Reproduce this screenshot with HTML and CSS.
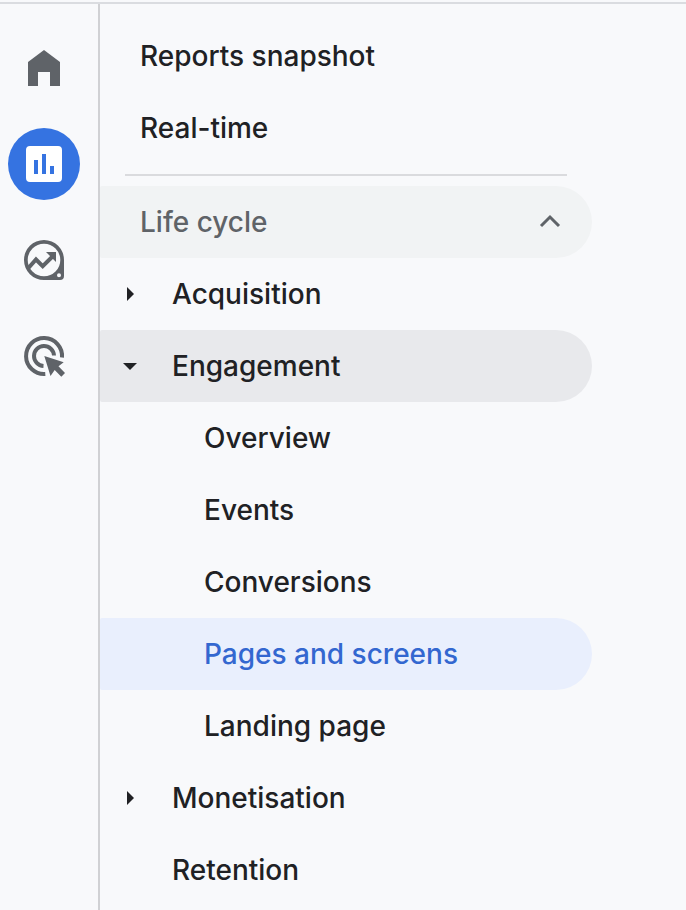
FILE: index.html
```html
<!DOCTYPE html>
<html lang="en">
<head>
    <meta charset="UTF-8">
    <meta name="viewport" content="width=device-width, initial-scale=1.0">
    <title>Reports</title>
    <link rel="stylesheet" href="styles.css">
</head>
<body>
    <div class="app">
        <nav class="rail" aria-label="Main">
            <a class="rail-item" href="#home" aria-label="Home">
                <svg viewBox="0 0 72 72"><path d="M36 18 20 30v24h10V40h12v14h10V30z"/></svg>
            </a>
            <a class="rail-item active" href="#reports" aria-label="Reports">
                <svg viewBox="0 0 72 72"><path fill-rule="evenodd" d="M22 18h28a4 4 0 0 1 4 4v28a4 4 0 0 1-4 4H22a4 4 0 0 1-4-4V22a4 4 0 0 1 4-4zM26 32v14h4V32zM34 26v20h4V26zM42 38v8h4v-8z"/></svg>
            </a>
            <a class="rail-item" href="#explore" aria-label="Explore">
                <svg viewBox="0 0 72 72">
                    <path fill-rule="evenodd" d="M36 16a20 20 0 0 0 0 40h16a4 4 0 0 0 4-4V36a20 20 0 0 0-20-20zm0 3.700a16.300 16.300 0 1 1 0 32.600 16.300 16.300 0 0 1 0-32.600zm15 29.600a2 2 0 1 0 0 4 2 2 0 0 0 0-4z"/>
                    <path class="stroke" d="m20 44.500 8-9 6.700 6.700L46 31"/>
                    <path d="M38 28h10v10z"/>
                </svg>
            </a>
            <a class="rail-item" href="#advertising" aria-label="Advertising">
                <svg viewBox="0 0 72 72">
                    <path class="stroke" d="M54 37.500A18 18 0 1 0 37.300 54M46 35.500A10 10 0 1 0 35.500 46"/>
                    <path d="m36.300 36 19.400 6.300-5.200 3.900 6.500 6.700-3.700 3.800-6.600-6.800-4.200 6z"/>
                </svg>
            </a>
        </nav>

        <nav class="menu" aria-label="Reports">
            <a class="row" href="#snapshot">Reports snapshot</a>
            <a class="row" href="#realtime">Real-time</a>
            <hr class="divider">
            <button class="row section" type="button" aria-expanded="true">
                Life cycle
                <svg class="chevron" viewBox="0 0 24 24"><path d="m3 16 9-9 9 9"/></svg>
            </button>
            <button class="row group" type="button" aria-expanded="false">
                <svg class="caret" viewBox="0 0 16 16"><path d="M5 1v14l7-7z"/></svg>
                Acquisition
            </button>
            <button class="row group open" type="button" aria-expanded="true">
                <svg class="caret" viewBox="0 0 16 16"><path d="M1 5h14l-7 7z"/></svg>
                Engagement
            </button>
            <a class="row child" href="#overview">Overview</a>
            <a class="row child" href="#events">Events</a>
            <a class="row child" href="#conversions">Conversions</a>
            <a class="row child selected" href="#pages" aria-current="page">Pages and screens</a>
            <a class="row child" href="#landing">Landing page</a>
            <button class="row group" type="button" aria-expanded="false">
                <svg class="caret" viewBox="0 0 16 16"><path d="M5 1v14l7-7z"/></svg>
                Monetisation
            </button>
            <a class="row leaf" href="#retention">Retention</a>
        </nav>
    </div>
</body>
</html>
```
FILE: styles.css
```css
* {
    box-sizing: border-box;
}

body {
    margin: 0;
    padding-top: 2px;
    background: #f8f9fb;
    color: #202124;
    font-family: Inter, Roboto, sans-serif;
}

.app {
    display: flex;
    min-height: calc(100vh - 2px);
    border-top: 2px solid #dadce0;
}

.rail {
    display: flex;
    flex-direction: column;
    flex: none;
    gap: 24px;
    padding: 28px 18px 0 8px;
    border-right: 2px solid #d0d1d4;
}

.rail-item {
    width: 72px;
    height: 72px;
    border-radius: 50%;
    color: #5f6368;
}

.rail-item.active {
    background: #3573e1;
    color: #fff;
}

.rail-item svg {
    display: block;
    fill: currentColor;
}

.rail-item .stroke {
    fill: none;
    stroke: currentColor;
    stroke-width: 4;
}

.menu {
    flex: 1;
    padding: 16px 94px 0 0;
}

.row {
    display: flex;
    align-items: center;
    width: 100%;
    height: 72px;
    padding: 0 30px 0 40px;
    border: 0;
    border-radius: 2px 36px 36px 2px;
    background: none;
    color: inherit;
    font: 500 28px/36px Inter, Roboto, sans-serif;
    text-align: left;
    text-decoration: none;
    white-space: nowrap;
    cursor: pointer;
}

.divider {
    height: 2px;
    margin: 10px 25px;
    border: 0;
    background: #dadbde;
}

.section {
    justify-content: space-between;
    background: #f1f3f4;
    color: #5f6368;
}

.group {
    gap: 34px;
    padding-left: 22px;
}

.open {
    background: #e8e9ec;
}

.leaf {
    padding-left: 72px;
}

.child {
    padding-left: 104px;
}

.selected {
    background: #e9effd;
    color: #3367d0;
}

.caret {
    width: 16px;
    height: 16px;
    fill: currentColor;
}

.chevron {
    width: 24px;
    height: 24px;
    fill: none;
    stroke: currentColor;
    stroke-width: 3;
}
```
